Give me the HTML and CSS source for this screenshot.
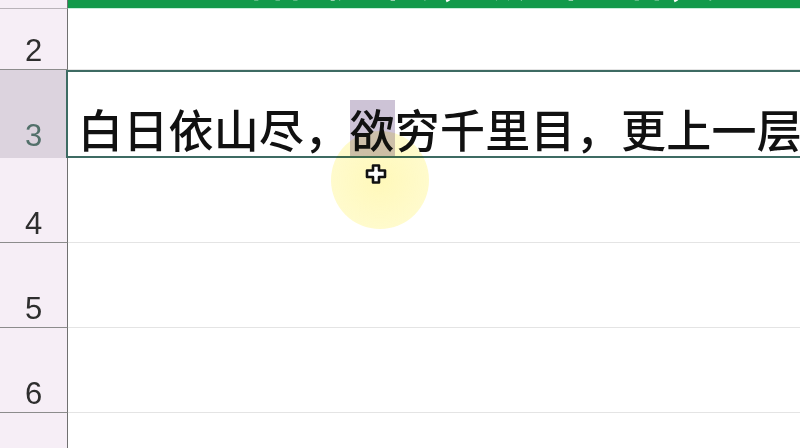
FILE: index.html
```html
<!DOCTYPE html>
<html lang="zh">
<head>
<meta charset="utf-8">
<title>Sheet</title>
<link rel="stylesheet" href="styles.css">
</head>
<body>
<div class="sheet">
  <div class="rh r1"><span>1</span></div>
  <div class="cell title"><span>白日依山尽，欲穷千里目，更上一层楼</span></div>

  <div class="rh">2</div>
  <div class="cell"></div>

  <div class="rh sel">3</div>
  <div class="cell active"><span class="txt">白日依山尽，<span class="hl">欲</span>穷千里目，更上一层楼。</span></div>

  <div class="rh">4</div>
  <div class="cell"></div>

  <div class="rh">5</div>
  <div class="cell"></div>

  <div class="rh">6</div>
  <div class="cell"></div>

  <div class="rh last"></div>
  <div class="cell"></div>
</div>
<div class="halo"></div>
<svg class="cursor" width="22" height="20" viewBox="0 0 22 20" aria-hidden="true">
  <path d="M8 1.5 H14 V6.5 H20 V13 H14 V18.5 H8 V13 H2 V6.5 H8 Z" fill="#fff" stroke="#111" stroke-width="2.6" stroke-linejoin="round"/>
</svg>
</body>
</html>
```
FILE: styles.css
```css
html, body {
  margin: 0;
  padding: 0;
  overflow: hidden;
  background: #ffffff;
}

.sheet {
  display: grid;
  grid-template-columns: 68px 860px;
  grid-template-rows: 9px 61px 88px 85px 85px 85px 60px;
  font-family: "Liberation Sans", Arial, sans-serif;
}

.rh {
  box-sizing: border-box;
  background: #f6eef6;
  border-right: 1px solid #707070;
  border-bottom: 1px solid #8c8c8c;
  display: flex;
  justify-content: center;
  align-items: flex-end;
  padding-bottom: 3px;
  font-size: 31px;
  line-height: 1;
  color: #2e2e2e;
}

.rh.r1 {
  overflow: hidden;
  padding-bottom: 0;
  border-bottom: 1px solid #b9b3b9;
}

.rh.r1 span {
  transform: translateY(-6px);
  color: #444;
}

.rh.sel {
  background: #dcd3de;
  color: #52706a;
  padding-bottom: 7px;
  border-bottom: none;
}

.rh.last {
  border-bottom: none;
}

.cell {
  box-sizing: border-box;
  border-bottom: 1px solid #e4e4e4;
  background: #ffffff;
}

.cell.title {
  background: #129a4b;
  border-bottom: 1px solid #c6eedb;
  overflow: hidden;
  display: flex;
  align-items: flex-end;
  justify-content: flex-start;
  padding-left: 182px;
}

.cell.title span {
  font-family: "Noto Sans CJK SC", sans-serif;
  font-weight: 700;
  font-size: 34px;
  line-height: 1;
  color: #ffffff;
  white-space: nowrap;
  transform: translateY(-8px);
  letter-spacing: 4px;
}

.cell.active {
  margin-left: -2px;
  border: 2px solid #3d6b63;
  border-right: none;
  display: flex;
  align-items: flex-end;
  padding-left: 10px;
  padding-bottom: 5px;
  overflow: hidden;
}

.txt {
  font-family: "Noto Sans CJK SC", sans-serif;
  font-weight: 500;
  font-size: 45px;
  line-height: 1;
  letter-spacing: 0.25px;
  color: #111111;
  white-space: nowrap;
}

.hl {
  background: linear-gradient(#cdc3d6, #cdc3d6) no-repeat 0 4px / 100% 100%;
}

.halo {
  position: absolute;
  left: 331px;
  top: 131px;
  width: 98px;
  height: 98px;
  border-radius: 50%;
  background: radial-gradient(circle, rgba(255, 244, 140, 0.6) 0%, rgba(255, 246, 150, 0.48) 72%, rgba(255, 248, 170, 0) 100%);
  mix-blend-mode: multiply;
  pointer-events: none;
}

.cursor {
  position: absolute;
  left: 365px;
  top: 164px;
}
```
